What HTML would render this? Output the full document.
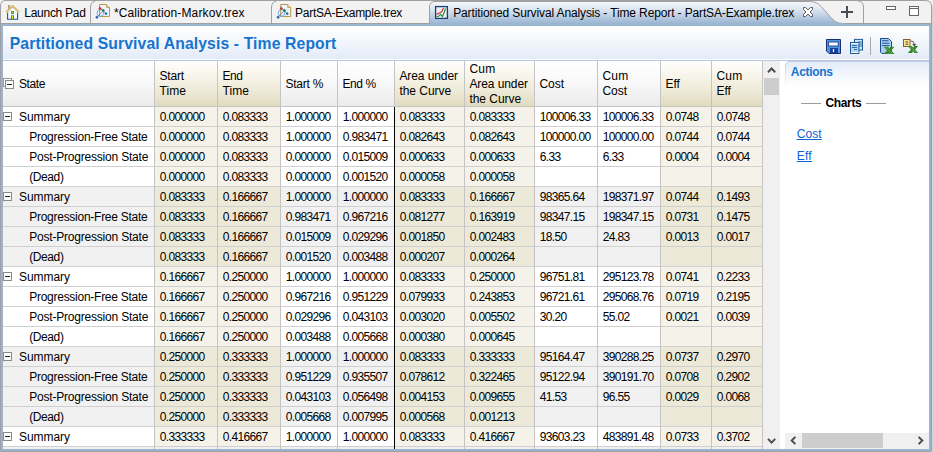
<!DOCTYPE html>
<html><head><meta charset="utf-8">
<style>
*{box-sizing:border-box;margin:0;padding:0}
html,body{width:933px;height:452px;overflow:hidden;background:#f0f0f0}
body{font-family:"Liberation Sans",sans-serif;font-size:11.6px;color:#000;position:relative}
.t{position:absolute;white-space:nowrap;line-height:16px;height:16px}
.b{position:absolute}
svg{position:absolute;overflow:visible}
#clip{position:absolute;left:0;top:0;width:933px;height:449px;overflow:hidden}
</style></head><body>
<div class="b" style="left:3px;top:26px;width:926px;height:33px;background:linear-gradient(#ffffff 0%,#fbfcfe 20%,#e3ebf7 100%);"></div>
<div class="b" style="left:3px;top:59px;width:926px;height:1px;background:#ffffff;"></div>
<div class="b" style="left:3px;top:60px;width:926px;height:1px;background:#b9c9e2;"></div>
<div class="b" style="left:763px;top:61px;width:166px;height:388px;background:#ffffff;"></div>
<div class="t" style="left:9.70px;top:35.86px;font-size:15.70px;letter-spacing:0.138px;color:#1673d0;font-weight:bold;">Partitioned Survival Analysis - Time Report</div>
<div class="b" style="left:763px;top:61px;width:17px;height:388px;background:#f0f0f0;"></div>
<div class="b" style="left:764px;top:78px;width:15px;height:17px;background:#cdcdcd;"></div>
<svg style="left:763px;top:61px" width="17" height="388"><path d="M5 11.2 L8.6 7.5 L12.2 11.2" fill="none" stroke="#4c4c4c" stroke-width="2"/><path d="M5 377.9 L8.6 381.6 L12.2 377.9" fill="none" stroke="#4c4c4c" stroke-width="2"/></svg>
<div class="b" style="left:785px;top:61px;width:144px;height:27px;border-top-left-radius:5px;background:linear-gradient(#bccbe5 0%,#d5e0f1 45%,#ffffff 100%)"></div>
<div class="b" style="left:786px;top:62px;width:143px;height:26px;border-top-left-radius:4px;background:linear-gradient(#e4ecf8 0%,#f2f6fc 45%,#ffffff 95%)"></div>
<div class="t" style="left:790.80px;top:63.84px;font-size:12.00px;letter-spacing:-0.315px;color:#1673d0;font-weight:bold;">Actions</div>
<div class="t" style="left:825.40px;top:94.84px;font-size:12.00px;letter-spacing:-0.335px;color:#000;font-weight:bold;">Charts</div>
<div class="b" style="left:801px;top:103px;width:20px;height:1px;background:#9c9c9c;"></div>
<div class="b" style="left:866px;top:103px;width:20px;height:1px;background:#9c9c9c;"></div>
<div class="t" style="left:796.70px;top:125.84px;font-size:12.00px;letter-spacing:0.082px;color:#0b62d6;text-decoration:underline;">Cost</div>
<div class="t" style="left:796.70px;top:147.84px;font-size:12.00px;letter-spacing:0.282px;color:#0b62d6;text-decoration:underline;">Eff</div>
<div class="b" style="left:785px;top:433px;width:144px;height:16px;background:#f0f0f0;"></div>
<div class="b" style="left:802px;top:433px;width:81px;height:15px;background:#cdcdcd;"></div>
<svg style="left:786px;top:432px" width="143" height="17"><path d="M9.4 4.9 L5.7 8.5 L9.4 12.1" fill="none" stroke="#4c4c4c" stroke-width="2"/><path d="M132.6 4.9 L136.3 8.5 L132.6 12.1" fill="none" stroke="#4c4c4c" stroke-width="2"/></svg>
<div id="clip">
<div class="b" style="left:3px;top:61px;width:151px;height:45px;background:linear-gradient(#ffffff 0%,#f9f9f9 45%,#ebebeb 100%);"></div>
<div class="b" style="left:155px;top:61px;width:62px;height:45px;background:linear-gradient(#ffffff 0%,#f8f6ec 30%,#eeead8 65%,#e1dbbe 100%);"></div>
<div class="b" style="left:218px;top:61px;width:62px;height:45px;background:linear-gradient(#ffffff 0%,#f8f6ec 30%,#eeead8 65%,#e1dbbe 100%);"></div>
<div class="b" style="left:281px;top:61px;width:56px;height:45px;background:linear-gradient(#ffffff 0%,#f9f9f9 45%,#ebebeb 100%);"></div>
<div class="b" style="left:338px;top:61px;width:56px;height:45px;background:linear-gradient(#ffffff 0%,#f9f9f9 45%,#ebebeb 100%);"></div>
<div class="b" style="left:395px;top:61px;width:69px;height:45px;background:linear-gradient(#ffffff 0%,#f8f6ec 30%,#eeead8 65%,#e1dbbe 100%);"></div>
<div class="b" style="left:465px;top:61px;width:69px;height:45px;background:linear-gradient(#ffffff 0%,#f8f6ec 30%,#eeead8 65%,#e1dbbe 100%);"></div>
<div class="b" style="left:535px;top:61px;width:62px;height:45px;background:linear-gradient(#ffffff 0%,#f9f9f9 45%,#ebebeb 100%);"></div>
<div class="b" style="left:598px;top:61px;width:62px;height:45px;background:linear-gradient(#ffffff 0%,#f9f9f9 45%,#ebebeb 100%);"></div>
<div class="b" style="left:661px;top:61px;width:50px;height:45px;background:linear-gradient(#ffffff 0%,#f8f6ec 30%,#eeead8 65%,#e1dbbe 100%);"></div>
<div class="b" style="left:712px;top:61px;width:50px;height:45px;background:linear-gradient(#ffffff 0%,#f8f6ec 30%,#eeead8 65%,#e1dbbe 100%);"></div>
<div class="b" style="left:3px;top:107px;width:151px;height:19px;background:#ffffff;"></div>
<div class="b" style="left:155px;top:107px;width:62px;height:19px;background:#f5f3e9;"></div>
<div class="b" style="left:218px;top:107px;width:62px;height:19px;background:#f5f3e9;"></div>
<div class="b" style="left:281px;top:107px;width:56px;height:19px;background:#ffffff;"></div>
<div class="b" style="left:338px;top:107px;width:56px;height:19px;background:#ffffff;"></div>
<div class="b" style="left:395px;top:107px;width:69px;height:19px;background:#f5f3e9;"></div>
<div class="b" style="left:465px;top:107px;width:69px;height:19px;background:#f5f3e9;"></div>
<div class="b" style="left:535px;top:107px;width:62px;height:19px;background:#ffffff;"></div>
<div class="b" style="left:598px;top:107px;width:62px;height:19px;background:#ffffff;"></div>
<div class="b" style="left:661px;top:107px;width:50px;height:19px;background:#f5f3e9;"></div>
<div class="b" style="left:712px;top:107px;width:50px;height:19px;background:#f5f3e9;"></div>
<div class="b" style="left:3px;top:127px;width:151px;height:19px;background:#ffffff;"></div>
<div class="b" style="left:155px;top:127px;width:62px;height:19px;background:#f5f3e9;"></div>
<div class="b" style="left:218px;top:127px;width:62px;height:19px;background:#f5f3e9;"></div>
<div class="b" style="left:281px;top:127px;width:56px;height:19px;background:#ffffff;"></div>
<div class="b" style="left:338px;top:127px;width:56px;height:19px;background:#ffffff;"></div>
<div class="b" style="left:395px;top:127px;width:69px;height:19px;background:#f5f3e9;"></div>
<div class="b" style="left:465px;top:127px;width:69px;height:19px;background:#f5f3e9;"></div>
<div class="b" style="left:535px;top:127px;width:62px;height:19px;background:#ffffff;"></div>
<div class="b" style="left:598px;top:127px;width:62px;height:19px;background:#ffffff;"></div>
<div class="b" style="left:661px;top:127px;width:50px;height:19px;background:#f5f3e9;"></div>
<div class="b" style="left:712px;top:127px;width:50px;height:19px;background:#f5f3e9;"></div>
<div class="b" style="left:3px;top:147px;width:151px;height:19px;background:#ffffff;"></div>
<div class="b" style="left:155px;top:147px;width:62px;height:19px;background:#f5f3e9;"></div>
<div class="b" style="left:218px;top:147px;width:62px;height:19px;background:#f5f3e9;"></div>
<div class="b" style="left:281px;top:147px;width:56px;height:19px;background:#ffffff;"></div>
<div class="b" style="left:338px;top:147px;width:56px;height:19px;background:#ffffff;"></div>
<div class="b" style="left:395px;top:147px;width:69px;height:19px;background:#f5f3e9;"></div>
<div class="b" style="left:465px;top:147px;width:69px;height:19px;background:#f5f3e9;"></div>
<div class="b" style="left:535px;top:147px;width:62px;height:19px;background:#ffffff;"></div>
<div class="b" style="left:598px;top:147px;width:62px;height:19px;background:#ffffff;"></div>
<div class="b" style="left:661px;top:147px;width:50px;height:19px;background:#f5f3e9;"></div>
<div class="b" style="left:712px;top:147px;width:50px;height:19px;background:#f5f3e9;"></div>
<div class="b" style="left:3px;top:167px;width:151px;height:19px;background:#ffffff;"></div>
<div class="b" style="left:155px;top:167px;width:62px;height:19px;background:#f5f3e9;"></div>
<div class="b" style="left:218px;top:167px;width:62px;height:19px;background:#f5f3e9;"></div>
<div class="b" style="left:281px;top:167px;width:56px;height:19px;background:#ffffff;"></div>
<div class="b" style="left:338px;top:167px;width:56px;height:19px;background:#ffffff;"></div>
<div class="b" style="left:395px;top:167px;width:69px;height:19px;background:#f5f3e9;"></div>
<div class="b" style="left:465px;top:167px;width:69px;height:19px;background:#f5f3e9;"></div>
<div class="b" style="left:535px;top:167px;width:62px;height:19px;background:#ffffff;"></div>
<div class="b" style="left:598px;top:167px;width:62px;height:19px;background:#ffffff;"></div>
<div class="b" style="left:661px;top:167px;width:50px;height:19px;background:#f5f3e9;"></div>
<div class="b" style="left:712px;top:167px;width:50px;height:19px;background:#f5f3e9;"></div>
<div class="b" style="left:3px;top:187px;width:151px;height:19px;background:#f1f1f1;"></div>
<div class="b" style="left:155px;top:187px;width:62px;height:19px;background:#ece9d8;"></div>
<div class="b" style="left:218px;top:187px;width:62px;height:19px;background:#ece9d8;"></div>
<div class="b" style="left:281px;top:187px;width:56px;height:19px;background:#f1f1f1;"></div>
<div class="b" style="left:338px;top:187px;width:56px;height:19px;background:#f1f1f1;"></div>
<div class="b" style="left:395px;top:187px;width:69px;height:19px;background:#ece9d8;"></div>
<div class="b" style="left:465px;top:187px;width:69px;height:19px;background:#ece9d8;"></div>
<div class="b" style="left:535px;top:187px;width:62px;height:19px;background:#f1f1f1;"></div>
<div class="b" style="left:598px;top:187px;width:62px;height:19px;background:#f1f1f1;"></div>
<div class="b" style="left:661px;top:187px;width:50px;height:19px;background:#ece9d8;"></div>
<div class="b" style="left:712px;top:187px;width:50px;height:19px;background:#ece9d8;"></div>
<div class="b" style="left:3px;top:207px;width:151px;height:19px;background:#f1f1f1;"></div>
<div class="b" style="left:155px;top:207px;width:62px;height:19px;background:#ece9d8;"></div>
<div class="b" style="left:218px;top:207px;width:62px;height:19px;background:#ece9d8;"></div>
<div class="b" style="left:281px;top:207px;width:56px;height:19px;background:#f1f1f1;"></div>
<div class="b" style="left:338px;top:207px;width:56px;height:19px;background:#f1f1f1;"></div>
<div class="b" style="left:395px;top:207px;width:69px;height:19px;background:#ece9d8;"></div>
<div class="b" style="left:465px;top:207px;width:69px;height:19px;background:#ece9d8;"></div>
<div class="b" style="left:535px;top:207px;width:62px;height:19px;background:#f1f1f1;"></div>
<div class="b" style="left:598px;top:207px;width:62px;height:19px;background:#f1f1f1;"></div>
<div class="b" style="left:661px;top:207px;width:50px;height:19px;background:#ece9d8;"></div>
<div class="b" style="left:712px;top:207px;width:50px;height:19px;background:#ece9d8;"></div>
<div class="b" style="left:3px;top:227px;width:151px;height:19px;background:#f1f1f1;"></div>
<div class="b" style="left:155px;top:227px;width:62px;height:19px;background:#ece9d8;"></div>
<div class="b" style="left:218px;top:227px;width:62px;height:19px;background:#ece9d8;"></div>
<div class="b" style="left:281px;top:227px;width:56px;height:19px;background:#f1f1f1;"></div>
<div class="b" style="left:338px;top:227px;width:56px;height:19px;background:#f1f1f1;"></div>
<div class="b" style="left:395px;top:227px;width:69px;height:19px;background:#ece9d8;"></div>
<div class="b" style="left:465px;top:227px;width:69px;height:19px;background:#ece9d8;"></div>
<div class="b" style="left:535px;top:227px;width:62px;height:19px;background:#f1f1f1;"></div>
<div class="b" style="left:598px;top:227px;width:62px;height:19px;background:#f1f1f1;"></div>
<div class="b" style="left:661px;top:227px;width:50px;height:19px;background:#ece9d8;"></div>
<div class="b" style="left:712px;top:227px;width:50px;height:19px;background:#ece9d8;"></div>
<div class="b" style="left:3px;top:247px;width:151px;height:19px;background:#f1f1f1;"></div>
<div class="b" style="left:155px;top:247px;width:62px;height:19px;background:#ece9d8;"></div>
<div class="b" style="left:218px;top:247px;width:62px;height:19px;background:#ece9d8;"></div>
<div class="b" style="left:281px;top:247px;width:56px;height:19px;background:#f1f1f1;"></div>
<div class="b" style="left:338px;top:247px;width:56px;height:19px;background:#f1f1f1;"></div>
<div class="b" style="left:395px;top:247px;width:69px;height:19px;background:#ece9d8;"></div>
<div class="b" style="left:465px;top:247px;width:69px;height:19px;background:#ece9d8;"></div>
<div class="b" style="left:535px;top:247px;width:62px;height:19px;background:#f1f1f1;"></div>
<div class="b" style="left:598px;top:247px;width:62px;height:19px;background:#f1f1f1;"></div>
<div class="b" style="left:661px;top:247px;width:50px;height:19px;background:#ece9d8;"></div>
<div class="b" style="left:712px;top:247px;width:50px;height:19px;background:#ece9d8;"></div>
<div class="b" style="left:3px;top:267px;width:151px;height:19px;background:#ffffff;"></div>
<div class="b" style="left:155px;top:267px;width:62px;height:19px;background:#f5f3e9;"></div>
<div class="b" style="left:218px;top:267px;width:62px;height:19px;background:#f5f3e9;"></div>
<div class="b" style="left:281px;top:267px;width:56px;height:19px;background:#ffffff;"></div>
<div class="b" style="left:338px;top:267px;width:56px;height:19px;background:#ffffff;"></div>
<div class="b" style="left:395px;top:267px;width:69px;height:19px;background:#f5f3e9;"></div>
<div class="b" style="left:465px;top:267px;width:69px;height:19px;background:#f5f3e9;"></div>
<div class="b" style="left:535px;top:267px;width:62px;height:19px;background:#ffffff;"></div>
<div class="b" style="left:598px;top:267px;width:62px;height:19px;background:#ffffff;"></div>
<div class="b" style="left:661px;top:267px;width:50px;height:19px;background:#f5f3e9;"></div>
<div class="b" style="left:712px;top:267px;width:50px;height:19px;background:#f5f3e9;"></div>
<div class="b" style="left:3px;top:287px;width:151px;height:19px;background:#ffffff;"></div>
<div class="b" style="left:155px;top:287px;width:62px;height:19px;background:#f5f3e9;"></div>
<div class="b" style="left:218px;top:287px;width:62px;height:19px;background:#f5f3e9;"></div>
<div class="b" style="left:281px;top:287px;width:56px;height:19px;background:#ffffff;"></div>
<div class="b" style="left:338px;top:287px;width:56px;height:19px;background:#ffffff;"></div>
<div class="b" style="left:395px;top:287px;width:69px;height:19px;background:#f5f3e9;"></div>
<div class="b" style="left:465px;top:287px;width:69px;height:19px;background:#f5f3e9;"></div>
<div class="b" style="left:535px;top:287px;width:62px;height:19px;background:#ffffff;"></div>
<div class="b" style="left:598px;top:287px;width:62px;height:19px;background:#ffffff;"></div>
<div class="b" style="left:661px;top:287px;width:50px;height:19px;background:#f5f3e9;"></div>
<div class="b" style="left:712px;top:287px;width:50px;height:19px;background:#f5f3e9;"></div>
<div class="b" style="left:3px;top:307px;width:151px;height:19px;background:#ffffff;"></div>
<div class="b" style="left:155px;top:307px;width:62px;height:19px;background:#f5f3e9;"></div>
<div class="b" style="left:218px;top:307px;width:62px;height:19px;background:#f5f3e9;"></div>
<div class="b" style="left:281px;top:307px;width:56px;height:19px;background:#ffffff;"></div>
<div class="b" style="left:338px;top:307px;width:56px;height:19px;background:#ffffff;"></div>
<div class="b" style="left:395px;top:307px;width:69px;height:19px;background:#f5f3e9;"></div>
<div class="b" style="left:465px;top:307px;width:69px;height:19px;background:#f5f3e9;"></div>
<div class="b" style="left:535px;top:307px;width:62px;height:19px;background:#ffffff;"></div>
<div class="b" style="left:598px;top:307px;width:62px;height:19px;background:#ffffff;"></div>
<div class="b" style="left:661px;top:307px;width:50px;height:19px;background:#f5f3e9;"></div>
<div class="b" style="left:712px;top:307px;width:50px;height:19px;background:#f5f3e9;"></div>
<div class="b" style="left:3px;top:327px;width:151px;height:19px;background:#ffffff;"></div>
<div class="b" style="left:155px;top:327px;width:62px;height:19px;background:#f5f3e9;"></div>
<div class="b" style="left:218px;top:327px;width:62px;height:19px;background:#f5f3e9;"></div>
<div class="b" style="left:281px;top:327px;width:56px;height:19px;background:#ffffff;"></div>
<div class="b" style="left:338px;top:327px;width:56px;height:19px;background:#ffffff;"></div>
<div class="b" style="left:395px;top:327px;width:69px;height:19px;background:#f5f3e9;"></div>
<div class="b" style="left:465px;top:327px;width:69px;height:19px;background:#f5f3e9;"></div>
<div class="b" style="left:535px;top:327px;width:62px;height:19px;background:#ffffff;"></div>
<div class="b" style="left:598px;top:327px;width:62px;height:19px;background:#ffffff;"></div>
<div class="b" style="left:661px;top:327px;width:50px;height:19px;background:#f5f3e9;"></div>
<div class="b" style="left:712px;top:327px;width:50px;height:19px;background:#f5f3e9;"></div>
<div class="b" style="left:3px;top:347px;width:151px;height:19px;background:#f1f1f1;"></div>
<div class="b" style="left:155px;top:347px;width:62px;height:19px;background:#ece9d8;"></div>
<div class="b" style="left:218px;top:347px;width:62px;height:19px;background:#ece9d8;"></div>
<div class="b" style="left:281px;top:347px;width:56px;height:19px;background:#f1f1f1;"></div>
<div class="b" style="left:338px;top:347px;width:56px;height:19px;background:#f1f1f1;"></div>
<div class="b" style="left:395px;top:347px;width:69px;height:19px;background:#ece9d8;"></div>
<div class="b" style="left:465px;top:347px;width:69px;height:19px;background:#ece9d8;"></div>
<div class="b" style="left:535px;top:347px;width:62px;height:19px;background:#f1f1f1;"></div>
<div class="b" style="left:598px;top:347px;width:62px;height:19px;background:#f1f1f1;"></div>
<div class="b" style="left:661px;top:347px;width:50px;height:19px;background:#ece9d8;"></div>
<div class="b" style="left:712px;top:347px;width:50px;height:19px;background:#ece9d8;"></div>
<div class="b" style="left:3px;top:367px;width:151px;height:19px;background:#f1f1f1;"></div>
<div class="b" style="left:155px;top:367px;width:62px;height:19px;background:#ece9d8;"></div>
<div class="b" style="left:218px;top:367px;width:62px;height:19px;background:#ece9d8;"></div>
<div class="b" style="left:281px;top:367px;width:56px;height:19px;background:#f1f1f1;"></div>
<div class="b" style="left:338px;top:367px;width:56px;height:19px;background:#f1f1f1;"></div>
<div class="b" style="left:395px;top:367px;width:69px;height:19px;background:#ece9d8;"></div>
<div class="b" style="left:465px;top:367px;width:69px;height:19px;background:#ece9d8;"></div>
<div class="b" style="left:535px;top:367px;width:62px;height:19px;background:#f1f1f1;"></div>
<div class="b" style="left:598px;top:367px;width:62px;height:19px;background:#f1f1f1;"></div>
<div class="b" style="left:661px;top:367px;width:50px;height:19px;background:#ece9d8;"></div>
<div class="b" style="left:712px;top:367px;width:50px;height:19px;background:#ece9d8;"></div>
<div class="b" style="left:3px;top:387px;width:151px;height:19px;background:#f1f1f1;"></div>
<div class="b" style="left:155px;top:387px;width:62px;height:19px;background:#ece9d8;"></div>
<div class="b" style="left:218px;top:387px;width:62px;height:19px;background:#ece9d8;"></div>
<div class="b" style="left:281px;top:387px;width:56px;height:19px;background:#f1f1f1;"></div>
<div class="b" style="left:338px;top:387px;width:56px;height:19px;background:#f1f1f1;"></div>
<div class="b" style="left:395px;top:387px;width:69px;height:19px;background:#ece9d8;"></div>
<div class="b" style="left:465px;top:387px;width:69px;height:19px;background:#ece9d8;"></div>
<div class="b" style="left:535px;top:387px;width:62px;height:19px;background:#f1f1f1;"></div>
<div class="b" style="left:598px;top:387px;width:62px;height:19px;background:#f1f1f1;"></div>
<div class="b" style="left:661px;top:387px;width:50px;height:19px;background:#ece9d8;"></div>
<div class="b" style="left:712px;top:387px;width:50px;height:19px;background:#ece9d8;"></div>
<div class="b" style="left:3px;top:407px;width:151px;height:19px;background:#f1f1f1;"></div>
<div class="b" style="left:155px;top:407px;width:62px;height:19px;background:#ece9d8;"></div>
<div class="b" style="left:218px;top:407px;width:62px;height:19px;background:#ece9d8;"></div>
<div class="b" style="left:281px;top:407px;width:56px;height:19px;background:#f1f1f1;"></div>
<div class="b" style="left:338px;top:407px;width:56px;height:19px;background:#f1f1f1;"></div>
<div class="b" style="left:395px;top:407px;width:69px;height:19px;background:#ece9d8;"></div>
<div class="b" style="left:465px;top:407px;width:69px;height:19px;background:#ece9d8;"></div>
<div class="b" style="left:535px;top:407px;width:62px;height:19px;background:#f1f1f1;"></div>
<div class="b" style="left:598px;top:407px;width:62px;height:19px;background:#f1f1f1;"></div>
<div class="b" style="left:661px;top:407px;width:50px;height:19px;background:#ece9d8;"></div>
<div class="b" style="left:712px;top:407px;width:50px;height:19px;background:#ece9d8;"></div>
<div class="b" style="left:3px;top:427px;width:151px;height:19px;background:#ffffff;"></div>
<div class="b" style="left:155px;top:427px;width:62px;height:19px;background:#f5f3e9;"></div>
<div class="b" style="left:218px;top:427px;width:62px;height:19px;background:#f5f3e9;"></div>
<div class="b" style="left:281px;top:427px;width:56px;height:19px;background:#ffffff;"></div>
<div class="b" style="left:338px;top:427px;width:56px;height:19px;background:#ffffff;"></div>
<div class="b" style="left:395px;top:427px;width:69px;height:19px;background:#f5f3e9;"></div>
<div class="b" style="left:465px;top:427px;width:69px;height:19px;background:#f5f3e9;"></div>
<div class="b" style="left:535px;top:427px;width:62px;height:19px;background:#ffffff;"></div>
<div class="b" style="left:598px;top:427px;width:62px;height:19px;background:#ffffff;"></div>
<div class="b" style="left:661px;top:427px;width:50px;height:19px;background:#f5f3e9;"></div>
<div class="b" style="left:712px;top:427px;width:50px;height:19px;background:#f5f3e9;"></div>
<div class="b" style="left:3px;top:106px;width:760px;height:1px;background:#c4c4c4;"></div>
<div class="b" style="left:3px;top:126px;width:760px;height:1px;background:#d0d0d0;"></div>
<div class="b" style="left:3px;top:146px;width:760px;height:1px;background:#d0d0d0;"></div>
<div class="b" style="left:3px;top:166px;width:760px;height:1px;background:#d0d0d0;"></div>
<div class="b" style="left:3px;top:186px;width:760px;height:1px;background:#d0d0d0;"></div>
<div class="b" style="left:3px;top:206px;width:760px;height:1px;background:#d0d0d0;"></div>
<div class="b" style="left:3px;top:226px;width:760px;height:1px;background:#d0d0d0;"></div>
<div class="b" style="left:3px;top:246px;width:760px;height:1px;background:#d0d0d0;"></div>
<div class="b" style="left:3px;top:266px;width:760px;height:1px;background:#d0d0d0;"></div>
<div class="b" style="left:3px;top:286px;width:760px;height:1px;background:#d0d0d0;"></div>
<div class="b" style="left:3px;top:306px;width:760px;height:1px;background:#d0d0d0;"></div>
<div class="b" style="left:3px;top:326px;width:760px;height:1px;background:#d0d0d0;"></div>
<div class="b" style="left:3px;top:346px;width:760px;height:1px;background:#d0d0d0;"></div>
<div class="b" style="left:3px;top:366px;width:760px;height:1px;background:#d0d0d0;"></div>
<div class="b" style="left:3px;top:386px;width:760px;height:1px;background:#d0d0d0;"></div>
<div class="b" style="left:3px;top:406px;width:760px;height:1px;background:#d0d0d0;"></div>
<div class="b" style="left:3px;top:426px;width:760px;height:1px;background:#d0d0d0;"></div>
<div class="b" style="left:3px;top:446px;width:760px;height:1px;background:#d0d0d0;"></div>
<div class="b" style="left:154px;top:61px;width:1px;height:388px;background:#c4c4c4;"></div>
<div class="b" style="left:217px;top:61px;width:1px;height:388px;background:#c4c4c4;"></div>
<div class="b" style="left:280px;top:61px;width:1px;height:388px;background:#c4c4c4;"></div>
<div class="b" style="left:337px;top:61px;width:1px;height:388px;background:#c4c4c4;"></div>
<div class="b" style="left:394px;top:61px;width:1px;height:388px;background:#c4c4c4;"></div>
<div class="b" style="left:464px;top:61px;width:1px;height:388px;background:#c4c4c4;"></div>
<div class="b" style="left:534px;top:61px;width:1px;height:388px;background:#c4c4c4;"></div>
<div class="b" style="left:597px;top:61px;width:1px;height:388px;background:#c4c4c4;"></div>
<div class="b" style="left:660px;top:61px;width:1px;height:388px;background:#c4c4c4;"></div>
<div class="b" style="left:711px;top:61px;width:1px;height:388px;background:#c4c4c4;"></div>
<div class="b" style="left:762px;top:61px;width:1px;height:388px;background:#c4c4c4;"></div>
<div class="b" style="left:394px;top:107px;width:1px;height:342px;background:#000;"></div>
<div class="t" style="left:19.00px;top:75.64px;font-size:12.00px;letter-spacing:-0.404px;color:#000;">State</div>
<div class="t" style="left:159.40px;top:67.84px;font-size:12.00px;letter-spacing:-0.148px;color:#000;">Start</div>
<div class="t" style="left:159.40px;top:82.84px;font-size:12.00px;letter-spacing:0.120px;color:#000;">Time</div>
<div class="t" style="left:222.40px;top:67.84px;font-size:12.00px;letter-spacing:-0.451px;color:#000;">End</div>
<div class="t" style="left:222.40px;top:82.84px;font-size:12.00px;letter-spacing:0.120px;color:#000;">Time</div>
<div class="t" style="left:285.40px;top:75.64px;font-size:12.00px;letter-spacing:-0.221px;color:#000;">Start %</div>
<div class="t" style="left:342.40px;top:75.64px;font-size:12.00px;letter-spacing:-0.391px;color:#000;">End %</div>
<div class="t" style="left:399.40px;top:67.84px;font-size:12.00px;letter-spacing:-0.087px;color:#000;">Area under</div>
<div class="t" style="left:399.40px;top:82.84px;font-size:12.00px;letter-spacing:-0.036px;color:#000;">the Curve</div>
<div class="t" style="left:469.40px;top:60.54px;font-size:12.00px;letter-spacing:0.221px;color:#000;">Cum</div>
<div class="t" style="left:469.40px;top:75.64px;font-size:12.00px;letter-spacing:-0.087px;color:#000;">Area under</div>
<div class="t" style="left:469.40px;top:90.64px;font-size:12.00px;letter-spacing:-0.036px;color:#000;">the Curve</div>
<div class="t" style="left:539.40px;top:75.64px;font-size:12.00px;letter-spacing:-0.018px;color:#000;">Cost</div>
<div class="t" style="left:602.40px;top:67.84px;font-size:12.00px;letter-spacing:0.221px;color:#000;">Cum</div>
<div class="t" style="left:602.40px;top:82.84px;font-size:12.00px;letter-spacing:-0.018px;color:#000;">Cost</div>
<div class="t" style="left:665.40px;top:75.64px;font-size:12.00px;letter-spacing:0.015px;color:#000;">Eff</div>
<div class="t" style="left:716.40px;top:67.84px;font-size:12.00px;letter-spacing:0.221px;color:#000;">Cum</div>
<div class="t" style="left:716.40px;top:82.84px;font-size:12.00px;letter-spacing:0.015px;color:#000;">Eff</div>
<div class="b" style="left:3px;top:78px;width:9px;height:9px;border:1px solid #9a9a9a;background:#fff"></div>
<div class="b" style="left:5px;top:80px;width:9px;height:9px;border:1px solid #8a8a8a;background:#fff"></div>
<div class="b" style="left:7px;top:84px;width:5px;height:1px;background:#222;"></div>
<div class="b" style="left:3px;top:112px;width:9px;height:9px;border:1px solid #8a8a8a;background:#fff"></div>
<div class="b" style="left:5px;top:116px;width:5px;height:1px;background:#222;"></div>
<div class="t" style="left:19.00px;top:108.84px;font-size:12.00px;letter-spacing:-0.049px;color:#000;">Summary</div>
<div class="t" style="left:159.70px;top:108.84px;font-size:12.00px;letter-spacing:-0.656px;color:#000;">0.000000</div>
<div class="t" style="left:222.70px;top:108.84px;font-size:12.00px;letter-spacing:-0.656px;color:#000;">0.083333</div>
<div class="t" style="left:285.70px;top:108.84px;font-size:12.00px;letter-spacing:-0.656px;color:#000;">1.000000</div>
<div class="t" style="left:342.70px;top:108.84px;font-size:12.00px;letter-spacing:-0.656px;color:#000;">1.000000</div>
<div class="t" style="left:399.70px;top:108.84px;font-size:12.00px;letter-spacing:-0.656px;color:#000;">0.083333</div>
<div class="t" style="left:469.70px;top:108.84px;font-size:12.00px;letter-spacing:-0.656px;color:#000;">0.083333</div>
<div class="t" style="left:539.70px;top:108.84px;font-size:12.00px;letter-spacing:-0.658px;color:#000;">100006.33</div>
<div class="t" style="left:602.70px;top:108.84px;font-size:12.00px;letter-spacing:-0.658px;color:#000;">100006.33</div>
<div class="t" style="left:665.70px;top:108.84px;font-size:12.00px;letter-spacing:-0.651px;color:#000;">0.0748</div>
<div class="t" style="left:716.70px;top:108.84px;font-size:12.00px;letter-spacing:-0.651px;color:#000;">0.0748</div>
<div class="t" style="left:29.20px;top:128.84px;font-size:12.00px;letter-spacing:-0.262px;color:#000;">Progression-Free State</div>
<div class="t" style="left:159.70px;top:128.84px;font-size:12.00px;letter-spacing:-0.656px;color:#000;">0.000000</div>
<div class="t" style="left:222.70px;top:128.84px;font-size:12.00px;letter-spacing:-0.656px;color:#000;">0.083333</div>
<div class="t" style="left:285.70px;top:128.84px;font-size:12.00px;letter-spacing:-0.656px;color:#000;">1.000000</div>
<div class="t" style="left:342.70px;top:128.84px;font-size:12.00px;letter-spacing:-0.656px;color:#000;">0.983471</div>
<div class="t" style="left:399.70px;top:128.84px;font-size:12.00px;letter-spacing:-0.656px;color:#000;">0.082643</div>
<div class="t" style="left:469.70px;top:128.84px;font-size:12.00px;letter-spacing:-0.656px;color:#000;">0.082643</div>
<div class="t" style="left:539.70px;top:128.84px;font-size:12.00px;letter-spacing:-0.658px;color:#000;">100000.00</div>
<div class="t" style="left:602.70px;top:128.84px;font-size:12.00px;letter-spacing:-0.658px;color:#000;">100000.00</div>
<div class="t" style="left:665.70px;top:128.84px;font-size:12.00px;letter-spacing:-0.651px;color:#000;">0.0744</div>
<div class="t" style="left:716.70px;top:128.84px;font-size:12.00px;letter-spacing:-0.651px;color:#000;">0.0744</div>
<div class="t" style="left:29.20px;top:148.84px;font-size:12.00px;letter-spacing:-0.200px;color:#000;">Post-Progression State</div>
<div class="t" style="left:159.70px;top:148.84px;font-size:12.00px;letter-spacing:-0.656px;color:#000;">0.000000</div>
<div class="t" style="left:222.70px;top:148.84px;font-size:12.00px;letter-spacing:-0.656px;color:#000;">0.083333</div>
<div class="t" style="left:285.70px;top:148.84px;font-size:12.00px;letter-spacing:-0.656px;color:#000;">0.000000</div>
<div class="t" style="left:342.70px;top:148.84px;font-size:12.00px;letter-spacing:-0.656px;color:#000;">0.015009</div>
<div class="t" style="left:399.70px;top:148.84px;font-size:12.00px;letter-spacing:-0.656px;color:#000;">0.000633</div>
<div class="t" style="left:469.70px;top:148.84px;font-size:12.00px;letter-spacing:-0.656px;color:#000;">0.000633</div>
<div class="t" style="left:539.70px;top:148.84px;font-size:12.00px;letter-spacing:-0.639px;color:#000;">6.33</div>
<div class="t" style="left:602.70px;top:148.84px;font-size:12.00px;letter-spacing:-0.639px;color:#000;">6.33</div>
<div class="t" style="left:665.70px;top:148.84px;font-size:12.00px;letter-spacing:-0.651px;color:#000;">0.0004</div>
<div class="t" style="left:716.70px;top:148.84px;font-size:12.00px;letter-spacing:-0.651px;color:#000;">0.0004</div>
<div class="t" style="left:29.20px;top:168.84px;font-size:12.00px;letter-spacing:-0.397px;color:#000;">(Dead)</div>
<div class="t" style="left:159.70px;top:168.84px;font-size:12.00px;letter-spacing:-0.656px;color:#000;">0.000000</div>
<div class="t" style="left:222.70px;top:168.84px;font-size:12.00px;letter-spacing:-0.656px;color:#000;">0.083333</div>
<div class="t" style="left:285.70px;top:168.84px;font-size:12.00px;letter-spacing:-0.656px;color:#000;">0.000000</div>
<div class="t" style="left:342.70px;top:168.84px;font-size:12.00px;letter-spacing:-0.656px;color:#000;">0.001520</div>
<div class="t" style="left:399.70px;top:168.84px;font-size:12.00px;letter-spacing:-0.656px;color:#000;">0.000058</div>
<div class="t" style="left:469.70px;top:168.84px;font-size:12.00px;letter-spacing:-0.656px;color:#000;">0.000058</div>
<div class="b" style="left:3px;top:192px;width:9px;height:9px;border:1px solid #8a8a8a;background:#fff"></div>
<div class="b" style="left:5px;top:196px;width:5px;height:1px;background:#222;"></div>
<div class="t" style="left:19.00px;top:188.84px;font-size:12.00px;letter-spacing:-0.049px;color:#000;">Summary</div>
<div class="t" style="left:159.70px;top:188.84px;font-size:12.00px;letter-spacing:-0.656px;color:#000;">0.083333</div>
<div class="t" style="left:222.70px;top:188.84px;font-size:12.00px;letter-spacing:-0.656px;color:#000;">0.166667</div>
<div class="t" style="left:285.70px;top:188.84px;font-size:12.00px;letter-spacing:-0.656px;color:#000;">1.000000</div>
<div class="t" style="left:342.70px;top:188.84px;font-size:12.00px;letter-spacing:-0.656px;color:#000;">1.000000</div>
<div class="t" style="left:399.70px;top:188.84px;font-size:12.00px;letter-spacing:-0.656px;color:#000;">0.083333</div>
<div class="t" style="left:469.70px;top:188.84px;font-size:12.00px;letter-spacing:-0.656px;color:#000;">0.166667</div>
<div class="t" style="left:539.70px;top:188.84px;font-size:12.00px;letter-spacing:-0.656px;color:#000;">98365.64</div>
<div class="t" style="left:602.70px;top:188.84px;font-size:12.00px;letter-spacing:-0.658px;color:#000;">198371.97</div>
<div class="t" style="left:665.70px;top:188.84px;font-size:12.00px;letter-spacing:-0.651px;color:#000;">0.0744</div>
<div class="t" style="left:716.70px;top:188.84px;font-size:12.00px;letter-spacing:-0.651px;color:#000;">0.1493</div>
<div class="t" style="left:29.20px;top:208.84px;font-size:12.00px;letter-spacing:-0.262px;color:#000;">Progression-Free State</div>
<div class="t" style="left:159.70px;top:208.84px;font-size:12.00px;letter-spacing:-0.656px;color:#000;">0.083333</div>
<div class="t" style="left:222.70px;top:208.84px;font-size:12.00px;letter-spacing:-0.656px;color:#000;">0.166667</div>
<div class="t" style="left:285.70px;top:208.84px;font-size:12.00px;letter-spacing:-0.656px;color:#000;">0.983471</div>
<div class="t" style="left:342.70px;top:208.84px;font-size:12.00px;letter-spacing:-0.656px;color:#000;">0.967216</div>
<div class="t" style="left:399.70px;top:208.84px;font-size:12.00px;letter-spacing:-0.656px;color:#000;">0.081277</div>
<div class="t" style="left:469.70px;top:208.84px;font-size:12.00px;letter-spacing:-0.656px;color:#000;">0.163919</div>
<div class="t" style="left:539.70px;top:208.84px;font-size:12.00px;letter-spacing:-0.656px;color:#000;">98347.15</div>
<div class="t" style="left:602.70px;top:208.84px;font-size:12.00px;letter-spacing:-0.658px;color:#000;">198347.15</div>
<div class="t" style="left:665.70px;top:208.84px;font-size:12.00px;letter-spacing:-0.651px;color:#000;">0.0731</div>
<div class="t" style="left:716.70px;top:208.84px;font-size:12.00px;letter-spacing:-0.651px;color:#000;">0.1475</div>
<div class="t" style="left:29.20px;top:228.84px;font-size:12.00px;letter-spacing:-0.200px;color:#000;">Post-Progression State</div>
<div class="t" style="left:159.70px;top:228.84px;font-size:12.00px;letter-spacing:-0.656px;color:#000;">0.083333</div>
<div class="t" style="left:222.70px;top:228.84px;font-size:12.00px;letter-spacing:-0.656px;color:#000;">0.166667</div>
<div class="t" style="left:285.70px;top:228.84px;font-size:12.00px;letter-spacing:-0.656px;color:#000;">0.015009</div>
<div class="t" style="left:342.70px;top:228.84px;font-size:12.00px;letter-spacing:-0.656px;color:#000;">0.029296</div>
<div class="t" style="left:399.70px;top:228.84px;font-size:12.00px;letter-spacing:-0.656px;color:#000;">0.001850</div>
<div class="t" style="left:469.70px;top:228.84px;font-size:12.00px;letter-spacing:-0.656px;color:#000;">0.002483</div>
<div class="t" style="left:539.70px;top:228.84px;font-size:12.00px;letter-spacing:-0.646px;color:#000;">18.50</div>
<div class="t" style="left:602.70px;top:228.84px;font-size:12.00px;letter-spacing:-0.646px;color:#000;">24.83</div>
<div class="t" style="left:665.70px;top:228.84px;font-size:12.00px;letter-spacing:-0.651px;color:#000;">0.0013</div>
<div class="t" style="left:716.70px;top:228.84px;font-size:12.00px;letter-spacing:-0.651px;color:#000;">0.0017</div>
<div class="t" style="left:29.20px;top:248.84px;font-size:12.00px;letter-spacing:-0.397px;color:#000;">(Dead)</div>
<div class="t" style="left:159.70px;top:248.84px;font-size:12.00px;letter-spacing:-0.656px;color:#000;">0.083333</div>
<div class="t" style="left:222.70px;top:248.84px;font-size:12.00px;letter-spacing:-0.656px;color:#000;">0.166667</div>
<div class="t" style="left:285.70px;top:248.84px;font-size:12.00px;letter-spacing:-0.656px;color:#000;">0.001520</div>
<div class="t" style="left:342.70px;top:248.84px;font-size:12.00px;letter-spacing:-0.656px;color:#000;">0.003488</div>
<div class="t" style="left:399.70px;top:248.84px;font-size:12.00px;letter-spacing:-0.656px;color:#000;">0.000207</div>
<div class="t" style="left:469.70px;top:248.84px;font-size:12.00px;letter-spacing:-0.656px;color:#000;">0.000264</div>
<div class="b" style="left:3px;top:272px;width:9px;height:9px;border:1px solid #8a8a8a;background:#fff"></div>
<div class="b" style="left:5px;top:276px;width:5px;height:1px;background:#222;"></div>
<div class="t" style="left:19.00px;top:268.84px;font-size:12.00px;letter-spacing:-0.049px;color:#000;">Summary</div>
<div class="t" style="left:159.70px;top:268.84px;font-size:12.00px;letter-spacing:-0.656px;color:#000;">0.166667</div>
<div class="t" style="left:222.70px;top:268.84px;font-size:12.00px;letter-spacing:-0.656px;color:#000;">0.250000</div>
<div class="t" style="left:285.70px;top:268.84px;font-size:12.00px;letter-spacing:-0.656px;color:#000;">1.000000</div>
<div class="t" style="left:342.70px;top:268.84px;font-size:12.00px;letter-spacing:-0.656px;color:#000;">1.000000</div>
<div class="t" style="left:399.70px;top:268.84px;font-size:12.00px;letter-spacing:-0.656px;color:#000;">0.083333</div>
<div class="t" style="left:469.70px;top:268.84px;font-size:12.00px;letter-spacing:-0.656px;color:#000;">0.250000</div>
<div class="t" style="left:539.70px;top:268.84px;font-size:12.00px;letter-spacing:-0.656px;color:#000;">96751.81</div>
<div class="t" style="left:602.70px;top:268.84px;font-size:12.00px;letter-spacing:-0.658px;color:#000;">295123.78</div>
<div class="t" style="left:665.70px;top:268.84px;font-size:12.00px;letter-spacing:-0.651px;color:#000;">0.0741</div>
<div class="t" style="left:716.70px;top:268.84px;font-size:12.00px;letter-spacing:-0.651px;color:#000;">0.2233</div>
<div class="t" style="left:29.20px;top:288.84px;font-size:12.00px;letter-spacing:-0.262px;color:#000;">Progression-Free State</div>
<div class="t" style="left:159.70px;top:288.84px;font-size:12.00px;letter-spacing:-0.656px;color:#000;">0.166667</div>
<div class="t" style="left:222.70px;top:288.84px;font-size:12.00px;letter-spacing:-0.656px;color:#000;">0.250000</div>
<div class="t" style="left:285.70px;top:288.84px;font-size:12.00px;letter-spacing:-0.656px;color:#000;">0.967216</div>
<div class="t" style="left:342.70px;top:288.84px;font-size:12.00px;letter-spacing:-0.656px;color:#000;">0.951229</div>
<div class="t" style="left:399.70px;top:288.84px;font-size:12.00px;letter-spacing:-0.656px;color:#000;">0.079933</div>
<div class="t" style="left:469.70px;top:288.84px;font-size:12.00px;letter-spacing:-0.656px;color:#000;">0.243853</div>
<div class="t" style="left:539.70px;top:288.84px;font-size:12.00px;letter-spacing:-0.656px;color:#000;">96721.61</div>
<div class="t" style="left:602.70px;top:288.84px;font-size:12.00px;letter-spacing:-0.658px;color:#000;">295068.76</div>
<div class="t" style="left:665.70px;top:288.84px;font-size:12.00px;letter-spacing:-0.651px;color:#000;">0.0719</div>
<div class="t" style="left:716.70px;top:288.84px;font-size:12.00px;letter-spacing:-0.651px;color:#000;">0.2195</div>
<div class="t" style="left:29.20px;top:308.84px;font-size:12.00px;letter-spacing:-0.200px;color:#000;">Post-Progression State</div>
<div class="t" style="left:159.70px;top:308.84px;font-size:12.00px;letter-spacing:-0.656px;color:#000;">0.166667</div>
<div class="t" style="left:222.70px;top:308.84px;font-size:12.00px;letter-spacing:-0.656px;color:#000;">0.250000</div>
<div class="t" style="left:285.70px;top:308.84px;font-size:12.00px;letter-spacing:-0.656px;color:#000;">0.029296</div>
<div class="t" style="left:342.70px;top:308.84px;font-size:12.00px;letter-spacing:-0.656px;color:#000;">0.043103</div>
<div class="t" style="left:399.70px;top:308.84px;font-size:12.00px;letter-spacing:-0.656px;color:#000;">0.003020</div>
<div class="t" style="left:469.70px;top:308.84px;font-size:12.00px;letter-spacing:-0.656px;color:#000;">0.005502</div>
<div class="t" style="left:539.70px;top:308.84px;font-size:12.00px;letter-spacing:-0.646px;color:#000;">30.20</div>
<div class="t" style="left:602.70px;top:308.84px;font-size:12.00px;letter-spacing:-0.646px;color:#000;">55.02</div>
<div class="t" style="left:665.70px;top:308.84px;font-size:12.00px;letter-spacing:-0.651px;color:#000;">0.0021</div>
<div class="t" style="left:716.70px;top:308.84px;font-size:12.00px;letter-spacing:-0.651px;color:#000;">0.0039</div>
<div class="t" style="left:29.20px;top:328.84px;font-size:12.00px;letter-spacing:-0.397px;color:#000;">(Dead)</div>
<div class="t" style="left:159.70px;top:328.84px;font-size:12.00px;letter-spacing:-0.656px;color:#000;">0.166667</div>
<div class="t" style="left:222.70px;top:328.84px;font-size:12.00px;letter-spacing:-0.656px;color:#000;">0.250000</div>
<div class="t" style="left:285.70px;top:328.84px;font-size:12.00px;letter-spacing:-0.656px;color:#000;">0.003488</div>
<div class="t" style="left:342.70px;top:328.84px;font-size:12.00px;letter-spacing:-0.656px;color:#000;">0.005668</div>
<div class="t" style="left:399.70px;top:328.84px;font-size:12.00px;letter-spacing:-0.656px;color:#000;">0.000380</div>
<div class="t" style="left:469.70px;top:328.84px;font-size:12.00px;letter-spacing:-0.656px;color:#000;">0.000645</div>
<div class="b" style="left:3px;top:352px;width:9px;height:9px;border:1px solid #8a8a8a;background:#fff"></div>
<div class="b" style="left:5px;top:356px;width:5px;height:1px;background:#222;"></div>
<div class="t" style="left:19.00px;top:348.84px;font-size:12.00px;letter-spacing:-0.049px;color:#000;">Summary</div>
<div class="t" style="left:159.70px;top:348.84px;font-size:12.00px;letter-spacing:-0.656px;color:#000;">0.250000</div>
<div class="t" style="left:222.70px;top:348.84px;font-size:12.00px;letter-spacing:-0.656px;color:#000;">0.333333</div>
<div class="t" style="left:285.70px;top:348.84px;font-size:12.00px;letter-spacing:-0.656px;color:#000;">1.000000</div>
<div class="t" style="left:342.70px;top:348.84px;font-size:12.00px;letter-spacing:-0.656px;color:#000;">1.000000</div>
<div class="t" style="left:399.70px;top:348.84px;font-size:12.00px;letter-spacing:-0.656px;color:#000;">0.083333</div>
<div class="t" style="left:469.70px;top:348.84px;font-size:12.00px;letter-spacing:-0.656px;color:#000;">0.333333</div>
<div class="t" style="left:539.70px;top:348.84px;font-size:12.00px;letter-spacing:-0.656px;color:#000;">95164.47</div>
<div class="t" style="left:602.70px;top:348.84px;font-size:12.00px;letter-spacing:-0.658px;color:#000;">390288.25</div>
<div class="t" style="left:665.70px;top:348.84px;font-size:12.00px;letter-spacing:-0.651px;color:#000;">0.0737</div>
<div class="t" style="left:716.70px;top:348.84px;font-size:12.00px;letter-spacing:-0.651px;color:#000;">0.2970</div>
<div class="t" style="left:29.20px;top:368.84px;font-size:12.00px;letter-spacing:-0.262px;color:#000;">Progression-Free State</div>
<div class="t" style="left:159.70px;top:368.84px;font-size:12.00px;letter-spacing:-0.656px;color:#000;">0.250000</div>
<div class="t" style="left:222.70px;top:368.84px;font-size:12.00px;letter-spacing:-0.656px;color:#000;">0.333333</div>
<div class="t" style="left:285.70px;top:368.84px;font-size:12.00px;letter-spacing:-0.656px;color:#000;">0.951229</div>
<div class="t" style="left:342.70px;top:368.84px;font-size:12.00px;letter-spacing:-0.656px;color:#000;">0.935507</div>
<div class="t" style="left:399.70px;top:368.84px;font-size:12.00px;letter-spacing:-0.656px;color:#000;">0.078612</div>
<div class="t" style="left:469.70px;top:368.84px;font-size:12.00px;letter-spacing:-0.656px;color:#000;">0.322465</div>
<div class="t" style="left:539.70px;top:368.84px;font-size:12.00px;letter-spacing:-0.656px;color:#000;">95122.94</div>
<div class="t" style="left:602.70px;top:368.84px;font-size:12.00px;letter-spacing:-0.658px;color:#000;">390191.70</div>
<div class="t" style="left:665.70px;top:368.84px;font-size:12.00px;letter-spacing:-0.651px;color:#000;">0.0708</div>
<div class="t" style="left:716.70px;top:368.84px;font-size:12.00px;letter-spacing:-0.651px;color:#000;">0.2902</div>
<div class="t" style="left:29.20px;top:388.84px;font-size:12.00px;letter-spacing:-0.200px;color:#000;">Post-Progression State</div>
<div class="t" style="left:159.70px;top:388.84px;font-size:12.00px;letter-spacing:-0.656px;color:#000;">0.250000</div>
<div class="t" style="left:222.70px;top:388.84px;font-size:12.00px;letter-spacing:-0.656px;color:#000;">0.333333</div>
<div class="t" style="left:285.70px;top:388.84px;font-size:12.00px;letter-spacing:-0.656px;color:#000;">0.043103</div>
<div class="t" style="left:342.70px;top:388.84px;font-size:12.00px;letter-spacing:-0.656px;color:#000;">0.056498</div>
<div class="t" style="left:399.70px;top:388.84px;font-size:12.00px;letter-spacing:-0.656px;color:#000;">0.004153</div>
<div class="t" style="left:469.70px;top:388.84px;font-size:12.00px;letter-spacing:-0.656px;color:#000;">0.009655</div>
<div class="t" style="left:539.70px;top:388.84px;font-size:12.00px;letter-spacing:-0.646px;color:#000;">41.53</div>
<div class="t" style="left:602.70px;top:388.84px;font-size:12.00px;letter-spacing:-0.646px;color:#000;">96.55</div>
<div class="t" style="left:665.70px;top:388.84px;font-size:12.00px;letter-spacing:-0.651px;color:#000;">0.0029</div>
<div class="t" style="left:716.70px;top:388.84px;font-size:12.00px;letter-spacing:-0.651px;color:#000;">0.0068</div>
<div class="t" style="left:29.20px;top:408.84px;font-size:12.00px;letter-spacing:-0.397px;color:#000;">(Dead)</div>
<div class="t" style="left:159.70px;top:408.84px;font-size:12.00px;letter-spacing:-0.656px;color:#000;">0.250000</div>
<div class="t" style="left:222.70px;top:408.84px;font-size:12.00px;letter-spacing:-0.656px;color:#000;">0.333333</div>
<div class="t" style="left:285.70px;top:408.84px;font-size:12.00px;letter-spacing:-0.656px;color:#000;">0.005668</div>
<div class="t" style="left:342.70px;top:408.84px;font-size:12.00px;letter-spacing:-0.656px;color:#000;">0.007995</div>
<div class="t" style="left:399.70px;top:408.84px;font-size:12.00px;letter-spacing:-0.656px;color:#000;">0.000568</div>
<div class="t" style="left:469.70px;top:408.84px;font-size:12.00px;letter-spacing:-0.656px;color:#000;">0.001213</div>
<div class="b" style="left:3px;top:432px;width:9px;height:9px;border:1px solid #8a8a8a;background:#fff"></div>
<div class="b" style="left:5px;top:436px;width:5px;height:1px;background:#222;"></div>
<div class="t" style="left:19.00px;top:428.84px;font-size:12.00px;letter-spacing:-0.049px;color:#000;">Summary</div>
<div class="t" style="left:159.70px;top:428.84px;font-size:12.00px;letter-spacing:-0.656px;color:#000;">0.333333</div>
<div class="t" style="left:222.70px;top:428.84px;font-size:12.00px;letter-spacing:-0.656px;color:#000;">0.416667</div>
<div class="t" style="left:285.70px;top:428.84px;font-size:12.00px;letter-spacing:-0.656px;color:#000;">1.000000</div>
<div class="t" style="left:342.70px;top:428.84px;font-size:12.00px;letter-spacing:-0.656px;color:#000;">1.000000</div>
<div class="t" style="left:399.70px;top:428.84px;font-size:12.00px;letter-spacing:-0.656px;color:#000;">0.083333</div>
<div class="t" style="left:469.70px;top:428.84px;font-size:12.00px;letter-spacing:-0.656px;color:#000;">0.416667</div>
<div class="t" style="left:539.70px;top:428.84px;font-size:12.00px;letter-spacing:-0.656px;color:#000;">93603.23</div>
<div class="t" style="left:602.70px;top:428.84px;font-size:12.00px;letter-spacing:-0.658px;color:#000;">483891.48</div>
<div class="t" style="left:665.70px;top:428.84px;font-size:12.00px;letter-spacing:-0.651px;color:#000;">0.0733</div>
<div class="t" style="left:716.70px;top:428.84px;font-size:12.00px;letter-spacing:-0.651px;color:#000;">0.3702</div>
</div>
<svg style="left:0;top:0" width="933" height="452" viewBox="0 0 933 452">
<defs><linearGradient id="ag" x1="0" y1="0" x2="0" y2="1"><stop offset="0" stop-color="#f7f9fc"/><stop offset="0.35" stop-color="#dbe5f1"/><stop offset="1" stop-color="#99b4d1"/></linearGradient></defs>
<path d="M0.5 24 L0.5 6 Q0.5 0.5 6 0.5 L925 0.5 Q931.5 0.5 931.5 6 L931.5 24 Z" fill="#f2f2f2"/>
<rect x="1" y="24" width="930" height="2" fill="#99b4d1"/>
<rect x="1" y="24" width="2" height="427" fill="#99b4d1"/>
<rect x="929" y="24" width="2" height="427" fill="#99b4d1"/>
<rect x="1" y="449" width="930" height="2" fill="#99b4d1"/>
<rect x="1" y="23" width="930" height="1" fill="#a0a0a0"/>
<path d="M429.5 24 L429.5 7 Q429.5 1.5 435 1.5 L808 1.5 C816 1.5 819 4 822.5 8 L830 16.5 C834 21 837 23.5 844 23.5 L846 24 Z" fill="url(#ag)"/>
<path d="M429.5 24 L429.5 7 Q429.5 1.5 435 1.5 L808 1.5 C816 1.5 819 4 822.5 8 L830 16.5 C834 21 837 23.5 844 23.5" fill="none" stroke="#a0a0a0" stroke-width="1"/>
<rect x="430" y="23" width="414" height="1" fill="#9bb6d3"/>
<path d="M90.5 23 L90.5 7 Q91 1.5 95.5 1" fill="none" stroke="#a0a0a0" stroke-width="1"/>
<path d="M271.5 23 L271.5 7 Q272 1.5 276.5 1" fill="none" stroke="#a0a0a0" stroke-width="1"/>
<path d="M863.5 23 L863.5 7 Q863.5 1.5 858 1" fill="none" stroke="#a0a0a0" stroke-width="1"/>
<path d="M0.5 451.5 L0.5 6 Q0.5 0.5 6 0.5 L925 0.5 Q931.5 0.5 931.5 6 L931.5 451.5 Z" fill="none" stroke="#a0a0a0" stroke-width="1"/>
<rect x="932" y="6" width="1" height="446" fill="#d4d4d4"/>

<rect x="841" y="11" width="12" height="2" fill="#454c54"/><rect x="846" y="6" width="2" height="12" fill="#454c54"/>
<path d="M803.5 7.5 L805.5 7.5 L808 10 L810.5 7.5 L812.5 7.5 L812.5 9.5 L810 12 L812.5 14.5 L812.5 16.5 L810.5 16.5 L808 14 L805.5 16.5 L803.5 16.5 L803.5 14.5 L806 12 L803.5 9.5 Z" fill="#fff" stroke="#5a5a5a" stroke-width="1"/>
<rect x="886.5" y="6.5" width="9" height="3" fill="#fff" stroke="#666" stroke-width="1"/>
<rect x="909.5" y="6.5" width="9" height="9" fill="#fff" stroke="#666" stroke-width="1"/><rect x="910" y="8" width="9" height="1" fill="#666"/>
</svg>
<div class="t" style="left:24.30px;top:4.74px;font-size:12.00px;letter-spacing:-0.276px;color:#000;">Launch Pad</div>
<div class="t" style="left:113.90px;top:4.74px;font-size:12.00px;letter-spacing:0.120px;color:#000;">*Calibration-Markov.trex</div>
<div class="t" style="left:295.10px;top:4.74px;font-size:12.00px;letter-spacing:-0.265px;color:#000;">PartSA-Example.trex</div>
<div class="t" style="left:453.20px;top:4.74px;font-size:12.00px;letter-spacing:-0.130px;color:#000;">Partitioned Survival Analysis - Time Report - PartSA-Example.trex</div>
<svg style="left:0;top:0" width="933" height="62" viewBox="0 0 933 62">
<!-- house -->
<g>
<rect x="8.2" y="5" width="1.6" height="4" fill="#b48a58"/>
<path d="M7.6 12 L7.6 19.3 L17.6 19.3 L17.6 12 L12.6 7.2 Z" fill="#f4f9ff"/><path d="M7.6 12.6 L7.6 19.3 L17.6 19.3 L17.6 12.6" fill="none" stroke="#2b4f9b" stroke-width="1.1"/>
<path d="M6.3 12.3 L12.6 6 L18.9 12.3" fill="none" stroke="#d9bc7c" stroke-width="2.2"/>
<rect x="11" y="11" width="3" height="3" fill="#4d9a3a"/><rect x="12" y="12" width="1" height="1" fill="#f2e63a"/>
<rect x="11" y="15.3" width="3" height="4.2" fill="#3f8f35"/><rect x="12" y="16" width="1" height="3" fill="#d8ea20"/>
</g>
<!-- tree doc icon -->
<g>
<path d="M99.5 4.5 L106.5 4.5 L109.5 7.5 L109.5 16.5 L99.5 16.5 Z" fill="#eef2fa" stroke="#b8984a" stroke-width="1"/>
<path d="M106.5 4.5 L106.5 7.5 L109.5 7.5" fill="#e8d8a0" stroke="#b8984a" stroke-width="0.8"/>
<circle cx="100.3" cy="13" r="3.3" fill="none" stroke="#6aa8dc" stroke-width="0.9"/>
<path d="M97 17.2 L100 14 L103.3 10.4 L106 13.7 M100 8.4 L103.3 10.4" fill="none" stroke="#4a6aa0" stroke-width="0.7"/>
<path d="M100 6.8 L101.6 8.4 L100 10 L98.4 8.4 Z" fill="#e0202a"/>
<path d="M103.3 8.8 L104.9 10.4 L103.3 12 L101.7 10.4 Z" fill="#1a8a4a"/>
<path d="M106 12.1 L107.6 13.7 L106 15.3 L104.4 13.7 Z" fill="#2a6ab8"/>
<path d="M96.9 15.6 L98.6 17.3 L96.9 19 L95.2 17.3 Z" fill="#2a6ab8"/>
</g>
<g transform="translate(181.2,0)">
<path d="M99.5 4.5 L106.5 4.5 L109.5 7.5 L109.5 16.5 L99.5 16.5 Z" fill="#eef2fa" stroke="#b8984a" stroke-width="1"/>
<path d="M106.5 4.5 L106.5 7.5 L109.5 7.5" fill="#e8d8a0" stroke="#b8984a" stroke-width="0.8"/>
<circle cx="100.3" cy="13" r="3.3" fill="none" stroke="#6aa8dc" stroke-width="0.9"/>
<path d="M97 17.2 L100 14 L103.3 10.4 L106 13.7 M100 8.4 L103.3 10.4" fill="none" stroke="#4a6aa0" stroke-width="0.7"/>
<path d="M100 6.8 L101.6 8.4 L100 10 L98.4 8.4 Z" fill="#e0202a"/>
<path d="M103.3 8.8 L104.9 10.4 L103.3 12 L101.7 10.4 Z" fill="#1a8a4a"/>
<path d="M106 12.1 L107.6 13.7 L106 15.3 L104.4 13.7 Z" fill="#2a6ab8"/>
<path d="M96.9 15.6 L98.6 17.3 L96.9 19 L95.2 17.3 Z" fill="#2a6ab8"/>
</g>
<!-- chart icon -->
<g>
<rect x="435.6" y="6.6" width="11.8" height="11.8" fill="#f0f0f0" stroke="#17407a" stroke-width="1.3"/>
<path d="M436.5 14.6 L438 13.6 L440.5 12.5 L442 11.5 L442.7 9.5 L443.8 8.2" fill="none" stroke="#d02030" stroke-width="1.1"/>
<path d="M436.5 16.5 L438.5 16.3 L440.5 14.3 L442.5 16.5 L443.5 14 L444.5 11.5 L445.5 8.3" fill="none" stroke="#1a8a3a" stroke-width="1.1"/>
</g>
<!-- save icon -->
<g>
<path d="M826.5 39.5 L840.5 39.5 L840.5 53.5 L829 53.5 L826.5 51 Z" fill="#4d96e0" stroke="#15306b" stroke-width="1"/>
<rect x="828.6" y="42" width="9.6" height="4" fill="#fdfdff" stroke="#1d3f86" stroke-width="0.9"/>
<rect x="830" y="48" width="8" height="5" fill="#1c3c9c"/>
<rect x="832.9" y="49" width="1.2" height="3" fill="#fff"/>
</g>
<!-- copy icon -->
<g>
<rect x="854.5" y="39.4" width="8" height="10.6" fill="#cfe6f7" stroke="#1f5a9a" stroke-width="1"/>
<path d="M858 42 h4 M858 44 h4 M858 46 h4" stroke="#2a5a98" stroke-width="0.9"/>
<rect x="850.5" y="42.5" width="8.4" height="11" fill="#b4d6ef" stroke="#1f5a9a" stroke-width="1"/>
<rect x="851" y="43" width="7.4" height="1" fill="#f4faff"/><rect x="851" y="52" width="7.4" height="1" fill="#f4faff"/>
<path d="M852 45.5 h5 M852 47.5 h5 M854 49.5 h3" stroke="#2a6aa8" stroke-width="1"/>
</g>
<rect x="870" y="37" width="1" height="18" fill="#a8a8a8"/>
<!-- excel doc -->
<g>
<path d="M880.5 38.5 L888.5 38.5 L891.5 41.5 L891.5 53 L882 53.5 L880.5 52 Z" fill="#a9d0f0" stroke="#1a4a8a" stroke-width="1"/>
<path d="M882 40.7 h6.5 M882 43.2 h7.5 M882 45.6 h7.5" stroke="#1f559a" stroke-width="1"/>
<path d="M883.8 46.8 L888 46.8 L889.2 48.6 L890.4 46.8 L894.4 46.8 L891.3 50.4 L894.4 54 L890.4 54 L889.2 52.2 L888 54 L883.8 54 L887 50.4 Z" fill="#35852a"/>
<path d="M886 47.3 L892.3 53.5" stroke="#8cc47a" stroke-width="0.7"/>
</g>
<!-- excel export -->
<g>
<rect x="903.5" y="39.5" width="6.5" height="7" fill="#fbe89a" stroke="#8a5a2a" stroke-width="1"/>
<path d="M905.5 42 h2.6 M905.5 44.2 h2.6" stroke="#5a3a1a" stroke-width="1"/>
<path d="M910.5 41 Q914 41 914.3 44.5" fill="none" stroke="#6a6a6a" stroke-width="1.1"/>
<path d="M912 44 L916.5 44 L914.3 46.6 Z" fill="#555"/>
<path d="M907.8 46 L912 46 L913.1 47.8 L914.2 46 L918.2 46 L915.1 49.5 L918.2 53 L914.2 53 L913.1 51.2 L912 53 L907.8 53 L910.9 49.5 Z" fill="#35852a"/>
<path d="M910 46.5 L916.2 52.5" stroke="#8cc47a" stroke-width="0.7"/>
</g>
</svg>

</body></html>
